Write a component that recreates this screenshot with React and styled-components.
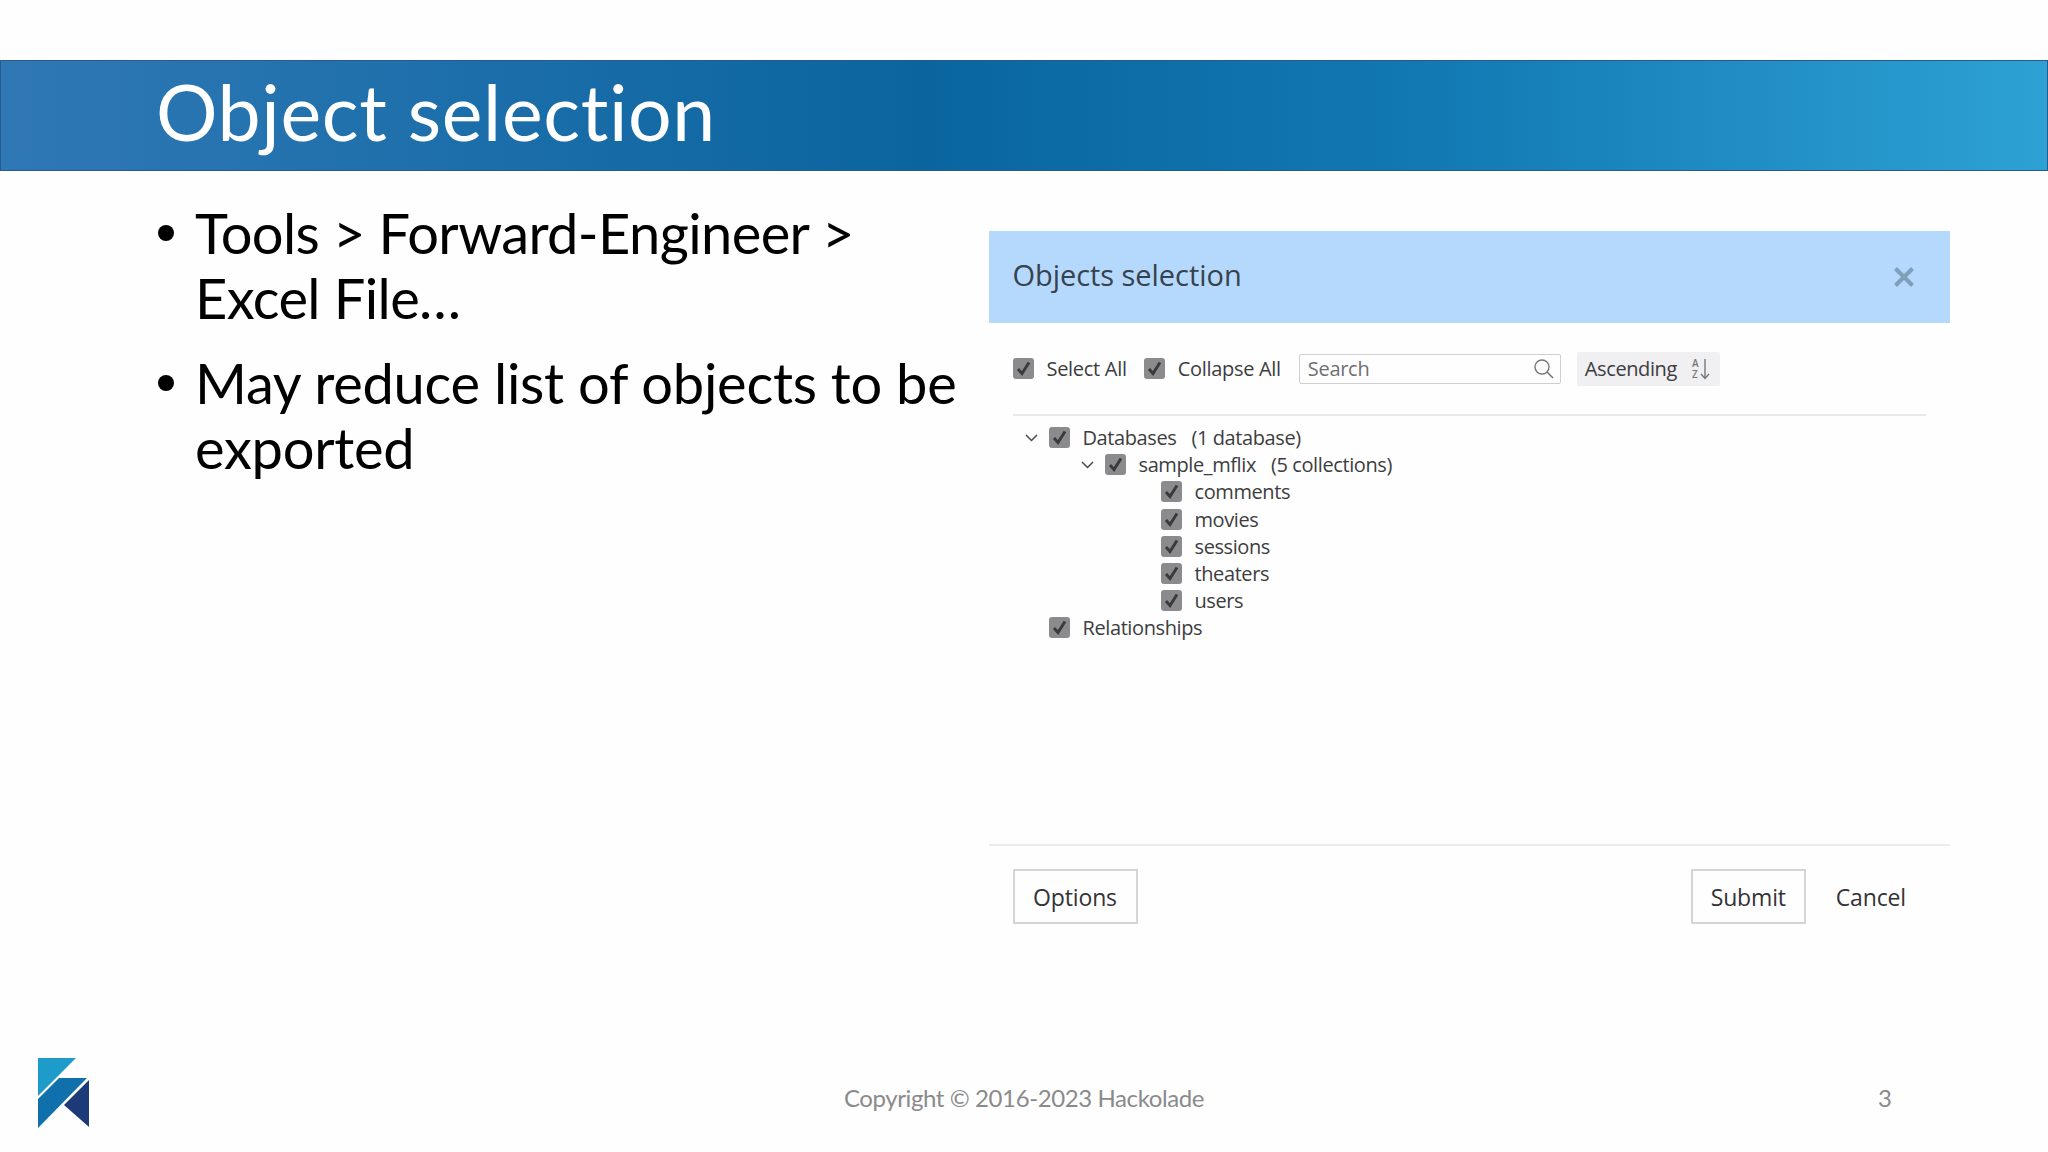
import React from "react";
import styled, { createGlobalStyle } from "styled-components";

const GlobalStyle = createGlobalStyle`
  html, body {
    margin: 0;
    padding: 0;
    background: #fefefe;
  }
`;

const Slide = styled.div`
  width: 2048px;
  height: 1152px;
  padding-top: 60px;
  box-sizing: border-box;
  display: flex;
  flex-direction: column;
  overflow: hidden;
  background: #fefefe;
`;

const Band = styled.header`
  height: 111px;
  box-sizing: border-box;
  padding: 0 0 10px 155px;
  display: flex;
  align-items: center;
  background: linear-gradient(90deg, #2f78b5 0%, #0a659f 45%, #1279b3 70%, #2da1d4 100%);
  border: 1px solid #2a5a8c;
`;

const Title = styled.h1`
  margin: 0;
  font-family: Lato, sans-serif;
  font-weight: 400;
  font-size: 77px;
  letter-spacing: 0.65px;
  color: #ffffff;
  white-space: nowrap;
`;

const Body = styled.main`
  flex: 1;
  display: grid;
  grid-template-columns: 831.5px 961.5px;
  padding: 60px 0 0 157px;
  align-items: start;
`;

const Bullets = styled.ul`
  list-style: none;
  margin: -31px 0 0;
  padding: 0;
  display: flex;
  flex-direction: column;
  gap: 20px;
`;

const Bullet = styled.li`
  position: relative;
  padding-left: 38px;
  font-family: Lato, sans-serif;
  font-size: 56px;
  line-height: 65px;
  letter-spacing: ${(p) => p.$spacing}px;
  color: #000000;

  &::before {
    content: "";
    position: absolute;
    left: 1px;
    top: 25px;
    width: 16px;
    height: 16px;
    border-radius: 50%;
    background: #000000;
  }
`;

const Dialog = styled.section`
  height: 716px;
  display: flex;
  flex-direction: column;
  font-family: "Open Sans", sans-serif;
  color: #3d3d40;
`;

const DialogHeader = styled.div`
  height: 92px;
  flex: none;
  padding: 0 35px 0 24px;
  box-sizing: border-box;
  display: flex;
  align-items: center;
  justify-content: space-between;
  background: #b5d9fd;
`;

const DialogTitle = styled.h2`
  margin: 0 0 5px;
  font-size: 29px;
  font-weight: 400;
  letter-spacing: -0.05px;
  color: #37424d;
`;

const Toolbar = styled.div`
  height: 93px;
  margin: 0 24px;
  flex: none;
  box-sizing: border-box;
  display: flex;
  align-items: center;
  border-bottom: 2px solid #e8e8ea;
`;

const ToolCheck = styled.label`
  display: flex;
  align-items: center;
  gap: 13px;
  margin-right: ${(p) => p.$gap}px;
  font-size: 20px;
  letter-spacing: -0.3px;
`;

const Box = styled.span`
  width: 21px;
  height: 21px;
  flex: none;
  border-radius: 3px;
  background: #8b8b8d;
  display: flex;
  align-items: center;
  justify-content: center;
`;

const SearchBox = styled.div`
  width: 262px;
  height: 30px;
  box-sizing: border-box;
  padding: 0 5px 0 8px;
  display: flex;
  align-items: center;
  justify-content: space-between;
  border: 1px solid #cfcfd3;
  border-radius: 2px;
  font-size: 20px;
  letter-spacing: -0.3px;
  color: #6f6f73;
`;

const SortButton = styled.div`
  width: 143px;
  height: 34px;
  margin-left: 16px;
  box-sizing: border-box;
  padding-left: 8px;
  display: flex;
  align-items: center;
  gap: 15px;
  background: #f0eff1;
  border-radius: 2px;
  font-size: 20px;
  letter-spacing: -0.4px;
`;

const SortIcon = styled.span`
  display: flex;
  align-items: center;
  gap: 2px;
  color: #77777b;
`;

const SortLetters = styled.span`
  display: flex;
  flex-direction: column;
  font-size: 10px;
  line-height: 11px;
  font-weight: 600;
`;

const Tree = styled.div`
  flex: 1;
  padding: 8px 24px 0 60px;
  font-size: 20px;
  letter-spacing: -0.4px;
`;

const TreeRow = styled.div`
  height: 27.2px;
  display: flex;
  align-items: center;
  margin-left: ${(p) => p.$indent}px;
`;

const Chevron = styled.svg`
  margin-left: -24px;
  margin-right: 11px;
  flex: none;
`;

const RowLabel = styled.span`
  margin-left: 13px;
  white-space: pre;
`;

const Note = styled.span`
  margin-left: 15px;
`;

const DialogFooter = styled.div`
  height: 103px;
  flex: none;
  box-sizing: border-box;
  padding: 23px 44px 0 24px;
  display: flex;
  align-items: flex-start;
  border-top: 2px solid #ececee;
  font-size: 23px;
  letter-spacing: -0.15px;
  color: #333336;
`;

const OutlineButton = styled.div`
  width: ${(p) => p.$width}px;
  height: 55px;
  margin-right: ${(p) => p.$right || 0}px;
  box-sizing: border-box;
  display: flex;
  align-items: center;
  justify-content: center;
  border: 2px solid #d5d5d8;
`;

const TextButton = styled.div`
  height: 55px;
  display: flex;
  align-items: center;
`;

const Spacer = styled.div`
  flex: 1;
`;

const Footer = styled.footer`
  height: 94px;
  flex: none;
  display: grid;
  grid-template-columns: 1fr auto 1fr;
  align-items: start;
  padding: 0 37px;
  font-family: Lato, sans-serif;
  font-size: 24px;
  color: #8a8a8c;
`;

const FooterText = styled.div`
  margin-top: 25px;
  letter-spacing: -0.4px;
`;

const PageNumber = styled.div`
  margin: 25px 119px 0 0;
  justify-self: end;
`;

const Check = () => (
  <Box>
    <svg width="17" height="17" viewBox="0 0 17 17" fill="none">
      <path d="M3 9 L7 13.5 L14 2.5" stroke="#3a3a3d" strokeWidth="2.9" />
    </svg>
  </Box>
);

const ChevronIcon = () => (
  <Chevron width="13" height="8" viewBox="0 0 13 8" fill="none">
    <path d="M1 1 L6.5 6.5 L12 1" stroke="#4a4a4d" strokeWidth="1.5" />
  </Chevron>
);

const rows = [
  { indent: 0, open: true, label: "Databases", note: "(1 database)" },
  { indent: 56, open: true, label: "sample_mflix", note: "(5 collections)" },
  { indent: 112, label: "comments" },
  { indent: 112, label: "movies" },
  { indent: 112, label: "sessions" },
  { indent: 112, label: "theaters" },
  { indent: 112, label: "users" },
  { indent: 0, label: "Relationships" },
];

function App() {
  return (
    <Slide>
      <GlobalStyle />
      <Band>
        <Title>Object selection</Title>
      </Band>
      <Body>
        <Bullets>
          <Bullet $spacing={-0.6}>
            Tools &gt; Forward-Engineer &gt;
            <br />
            Excel File…
          </Bullet>
          <Bullet $spacing={-0.25}>
            May reduce list of objects to be
            <br />
            exported
          </Bullet>
        </Bullets>
        <Dialog>
          <DialogHeader>
            <DialogTitle>Objects selection</DialogTitle>
            <svg width="22" height="22" viewBox="0 0 22 22" fill="none">
              <path d="M2.5 2.5 L19.5 19.5 M19.5 2.5 L2.5 19.5" stroke="#7f9fbb" strokeWidth="4.2" />
            </svg>
          </DialogHeader>
          <Toolbar>
            <ToolCheck $gap={17}>
              <Check />
              Select All
            </ToolCheck>
            <ToolCheck $gap={18}>
              <Check />
              Collapse All
            </ToolCheck>
            <SearchBox>
              Search
              <svg width="22" height="22" viewBox="0 0 22 22" fill="none">
                <circle cx="9" cy="9" r="7" stroke="#77777b" strokeWidth="1.4" />
                <path d="M14 14 L20 20" stroke="#77777b" strokeWidth="1.6" />
              </svg>
            </SearchBox>
            <SortButton>
              Ascending
              <SortIcon>
                <SortLetters>
                  <span>A</span>
                  <span>Z</span>
                </SortLetters>
                <svg width="10" height="22" viewBox="0 0 10 22" fill="none">
                  <path d="M5 1 V20 M1 16 L5 20.5 L9 16" stroke="#77777b" strokeWidth="1.4" />
                </svg>
              </SortIcon>
            </SortButton>
          </Toolbar>
          <Tree>
            {rows.map((row) => (
              <TreeRow key={row.label} $indent={row.indent}>
                {row.open && <ChevronIcon />}
                <Check />
                <RowLabel>{row.label}</RowLabel>
                {row.note && <Note>{row.note}</Note>}
              </TreeRow>
            ))}
          </Tree>
          <DialogFooter>
            <OutlineButton $width={125}>Options</OutlineButton>
            <Spacer />
            <OutlineButton $width={115} $right={30}>
              Submit
            </OutlineButton>
            <TextButton>Cancel</TextButton>
          </DialogFooter>
        </Dialog>
      </Body>
      <Footer>
        <svg width="53" height="71" viewBox="0 0 53 71" fill="none">
          <path d="M1 0 H39 L1 38 Z" fill="#1e9cc9" />
          <path d="M22 20 H50 L1 70 V41 Z" fill="#0f70ac" />
          <path d="M52 22 V69 L27 47 Z" fill="#1d3a78" />
        </svg>
        <FooterText>Copyright © 2016-2023 Hackolade</FooterText>
        <PageNumber>3</PageNumber>
      </Footer>
    </Slide>
  );
}

export default App;
